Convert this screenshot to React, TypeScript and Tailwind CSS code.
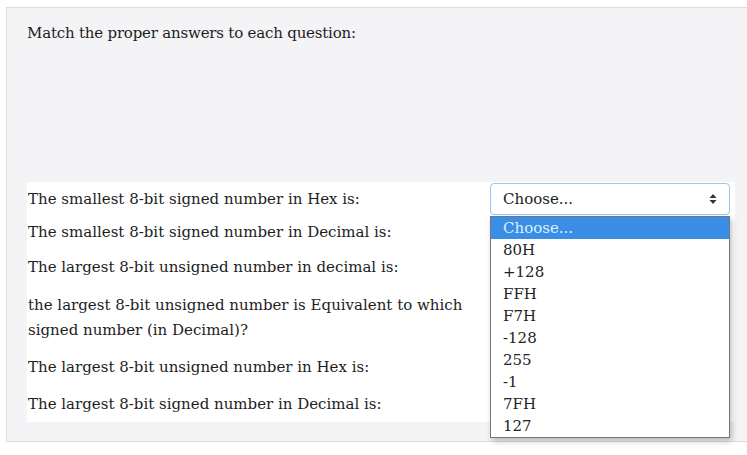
import { useState } from 'react';

const questions = [
  { text: 'The smallest 8-bit signed number in Hex is:', h: 'h-[34px]' },
  { text: 'The smallest 8-bit signed number in Decimal is:', h: 'h-[33px]' },
  { text: 'The largest 8-bit unsigned number in decimal is:', h: 'h-[37px]' },
  {
    text: 'the largest 8-bit unsigned number is Equivalent to which signed number (in Decimal)?',
    h: 'h-[63px]',
  },
  { text: 'The largest 8-bit unsigned number in Hex is:', h: 'h-[37px]' },
  { text: 'The largest 8-bit signed number in Decimal is:', h: 'h-[36px]' },
];

const options = ['Choose...', '80H', '+128', 'FFH', 'F7H', '-128', '255', '-1', '7FH', '127'];

function SortArrows() {
  return (
    <svg width="8" height="12" viewBox="0 0 8 12" className="text-[#333]">
      <path d="M4 1 L7.5 5 L0.5 5 Z" fill="currentColor" />
      <path d="M4 11 L7.5 7 L0.5 7 Z" fill="currentColor" />
    </svg>
  );
}

// selects under the open list are fully covered, so only the top one shows its label
function FakeSelect({ focused }: { focused?: boolean }) {
  return (
    <div
      className={`flex h-[32px] w-[240px] items-center justify-between rounded-[4px] border bg-white pl-[12px] pr-[12px] text-[#222] ${
        focused ? 'border-[#9ec5ee]' : 'border-[#ced4da]'
      }`}
    >
      {focused && <span>Choose...</span>}
      {focused && <SortArrows />}
    </div>
  );
}

export default function App() {
  const [active] = useState(0);

  return (
    <div
      className="relative h-[455px] w-[747px] overflow-hidden bg-white pl-[6px] pt-[7px] text-[15px] text-[#1d1d1d]"
      style={{ fontFamily: '"DejaVu Serif", "Liberation Serif", serif' }}
    >
      <div className="h-[435px] w-[760px] border border-[#dcdde0] bg-[#f4f4f6] pl-[20px] pt-[13px]">
        <p className="leading-[24px] tracking-[-0.2px]">Match the proper answers to each question:</p>

        {/* questions */}
        <div className="mt-[137px] w-[708px] bg-white">
          {questions.map((q, i) => (
            <div key={i} className={`flex items-center ${q.h}`}>
              <div className="w-[463px] pr-[20px] pl-[1px] leading-[25px]">{q.text}</div>
              <FakeSelect focused={i === active} />
            </div>
          ))}
        </div>
      </div>

      {/* open dropdown */}
      <div className="absolute left-[490px] top-[216px] w-[240px] border border-[#767676] bg-white shadow-[2px_3px_6px_rgba(0,0,0,0.25)]">
        {options.map((o, i) => (
          <div
            key={o}
            className={`h-[22px] pl-[12px] leading-[22px] ${
              i === active ? 'bg-[#3a8ee6] text-[#dcefff]' : 'text-[#222]'
            }`}
          >
            {o}
          </div>
        ))}
      </div>
    </div>
  );
}
